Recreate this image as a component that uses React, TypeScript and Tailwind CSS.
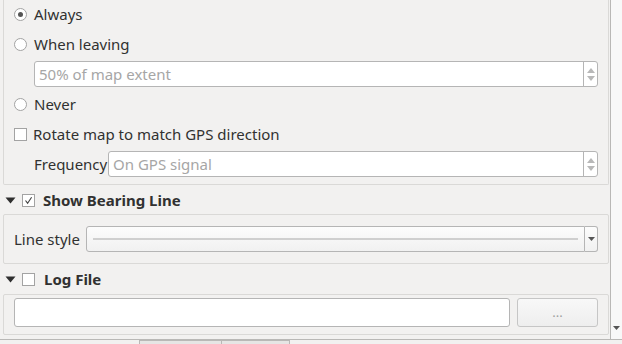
import React from 'react';

const FONT = { fontFamily: '"Noto Sans", "Open Sans", sans-serif' };

function Radio({ checked = false }: { checked?: boolean }) {
  return (
    <span className="w-[13px] h-[13px] shrink-0 rounded-full border border-[#a3a3a3] bg-white flex items-center justify-center">
      {checked && <span className="w-[5px] h-[5px] rounded-full bg-[#555]" />}
    </span>
  );
}

function Check({ checked = false }: { checked?: boolean }) {
  return (
    <span className="w-[13px] h-[13px] shrink-0 border border-[#a3a3a3] bg-white flex items-center justify-center">
      {checked && (
        <svg width="9" height="9" viewBox="0 0 9 9">
          <path d="M1.5 4.5 L3.6 7.2 L7.6 1.2" fill="none" stroke="#444" strokeWidth="1.1" />
        </svg>
      )}
    </span>
  );
}

function Triangle() {
  return (
    <svg width="11" height="7" viewBox="0 0 11 7" className="shrink-0">
      <path d="M0.5 0.5 L10.5 0.5 L5.5 6.5 Z" fill="#2f2f2f" />
    </svg>
  );
}

function SpinBox({ text }: { text: string }) {
  return (
    <div className="flex-1 h-[26px] flex bg-white border border-[#b5b5b5] rounded-[3px]">
      <div className="flex-1 flex items-center pl-[4px] text-[#a6a6a6]">{text}</div>
      <div className="w-[14px] border-l border-[#b5b5b5] flex flex-col items-center justify-center gap-[3px]">
        <svg width="8" height="5" viewBox="0 0 8 5">
          <path d="M0 5 L4 0 L8 5 Z" fill="#b8b8b8" />
        </svg>
        <svg width="8" height="5" viewBox="0 0 8 5">
          <path d="M0 0 L4 5 L8 0 Z" fill="#b8b8b8" />
        </svg>
      </div>
    </div>
  );
}

export default function App() {
  return (
    <div
      className="w-[622px] h-[344px] bg-[#f2f1f0] text-[15px] text-[#313131] overflow-hidden flex flex-col"
      style={FONT}
    >
      <div className="flex h-[339px]">
        {/* scroll viewport */}
        <div className="w-[611px] border-r border-[#b9b8b6] flex flex-col">
          {/* group 1 (top cut off) */}
          <div className="ml-[3px] w-[606px] border-x border-b border-[#dad9d7] rounded-b-[2px] px-[10px] pb-[7px] flex flex-col">
            <div className="h-[29px] flex items-center gap-[7px]">
              <Radio checked />
              <span>Always</span>
            </div>
            <div className="h-[30px] flex items-center gap-[7px]">
              <Radio />
              <span>When leaving</span>
            </div>
            <div className="mt-[2px] pl-[20px] flex">
              <SpinBox text="50% of map extent" />
            </div>
            <div className="mt-[2px] h-[30px] flex items-center gap-[7px]">
              <Radio />
              <span>Never</span>
            </div>
            <div className="h-[30px] flex items-center gap-[6px]">
              <Check />
              <span>Rotate map to match GPS direction</span>
            </div>
            <div className="mt-[2px] pl-[20px] flex items-center">
              <span className="w-[74px]">Frequency</span>
              <SpinBox text="On GPS signal" />
            </div>
          </div>

          {/* Show Bearing Line */}
          <div className="h-[29px] pt-[2px] flex items-center pl-[5px] gap-[6px]">
            <Triangle />
            <Check checked />
            <span className="ml-[2px] font-bold">Show Bearing Line</span>
          </div>
          <div className="ml-[3px] w-[606px] h-[50px] border border-[#dad9d7] rounded-[2px] px-[10px] flex items-center">
            <span className="w-[72px]">Line style</span>
            <div className="flex-1 h-[26px] flex">
              <div className="flex-1 border border-[#b5b5b5] rounded-l-[3px] bg-gradient-to-b from-[#fcfcfc] to-[#f1f1f1] flex items-center px-[6px]">
                <div className="w-full h-[2px] bg-[#cfcfcf]" />
              </div>
              <div className="w-[13px] border border-l-0 border-[#b5b5b5] rounded-r-[3px] bg-gradient-to-b from-[#fcfcfc] to-[#f1f1f1] flex items-center justify-center">
                <svg width="7" height="4" viewBox="0 0 7 4">
                  <path d="M0 0 L7 0 L3.5 4 Z" fill="#555" />
                </svg>
              </div>
            </div>
          </div>

          {/* Log File */}
          <div className="h-[30px] pt-[1px] flex items-center pl-[5px] gap-[6px]">
            <Triangle />
            <Check />
            <span className="ml-[3px] font-bold">Log File</span>
          </div>
          <div className="ml-[3px] w-[606px] h-[41px] border border-[#dad9d7] rounded-[2px] px-[10px] pt-[3px] flex gap-[7px]">
            <div className="w-[496px] h-[29px] bg-white border border-[#b5b5b5] rounded-[3px]" />
            <div className="flex-1 h-[29px] border border-[#c6c6c6] rounded-[3px] bg-gradient-to-b from-[#f8f8f8] to-[#eeeeee] flex items-center justify-center text-[#a0a0a0] text-[13px]">
              ...
            </div>
          </div>
        </div>

        {/* vertical scrollbar */}
        <div className="w-[11px] bg-[#f8f8f8] flex flex-col justify-end items-center pb-[9px]">
          <svg width="7" height="4" viewBox="0 0 7 4">
            <path d="M0 0 L7 0 L3.5 4 Z" fill="#555" />
          </svg>
        </div>
      </div>

      {/* tab strip */}
      <div className="flex-1 flex border-t border-[#b9b8b6]">
        <div className="w-[139px]" />
        <div className="w-[83px] border-t border-x border-[#b9b8b6] bg-[#e6e5e4]" />
        <div className="w-[68px] border-t border-r border-[#b9b8b6] bg-[#e6e5e4]" />
      </div>
    </div>
  );
}
